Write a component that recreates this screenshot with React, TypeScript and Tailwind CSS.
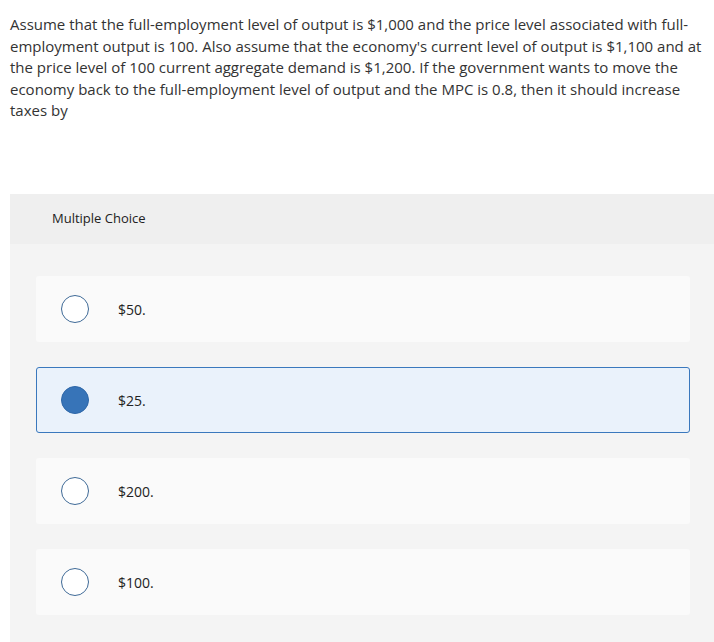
const QUESTION = [
  'Assume that the full-employment level of output is $1,000 and the price level associated with full-',
  "employment output is 100. Also assume that the economy's current level of output is $1,100 and at",
  'the price level of 100 current aggregate demand is $1,200. If the government wants to move the',
  'economy back to the full-employment level of output and the MPC is 0.8, then it should increase',
  'taxes by',
]
const OPTIONS = ['$50.', '$25.', '$200.', '$100.']
const SELECTED = 1

function Radio({ checked }: { checked: boolean }) {
  return checked ? (
    <span className="block w-[28px] h-[28px] rounded-full bg-[#3774b8] border border-[#2e67a8]" />
  ) : (
    <span className="block w-[28px] h-[28px] rounded-full bg-white border-[1.5px] border-[#3f6a97]" />
  )
}

export default function App() {
  return (
    <div className="w-[714px] h-[642px] bg-white overflow-hidden font-['Open_Sans',sans-serif] text-[#333]">
      <div className="h-[194px] pl-[10px] pt-[14px] text-[15px] leading-[21.5px]">
        {QUESTION.map((line) => (
          <div key={line} className="whitespace-nowrap">
            {line}
          </div>
        ))}
      </div>

      <div className="ml-[10px] bg-[#f4f4f4] h-[448px]">
        <div className="h-[50px] bg-[#efefef] flex items-center pl-[42px] text-[13px] text-[#222]">
          Multiple Choice
        </div>
        <div className="pt-[32px] pl-[26px] pr-[24px] flex flex-col gap-[25px]">
          {OPTIONS.map((opt, i) => {
            const sel = i === SELECTED
            return (
              <div
                key={opt}
                className={
                  sel
                    ? 'h-[66px] flex items-center rounded-[3px] border border-[#3a78bd] bg-[#eaf2fb]'
                    : 'h-[66px] flex items-center rounded-[3px] border border-transparent bg-[#fafafa]'
                }
              >
                <div className="pl-[24px] pr-[29px]">
                  <Radio checked={sel} />
                </div>
                <span className="text-[14px] text-[#222]">{opt}</span>
              </div>
            )
          })}
        </div>
      </div>
    </div>
  )
}
